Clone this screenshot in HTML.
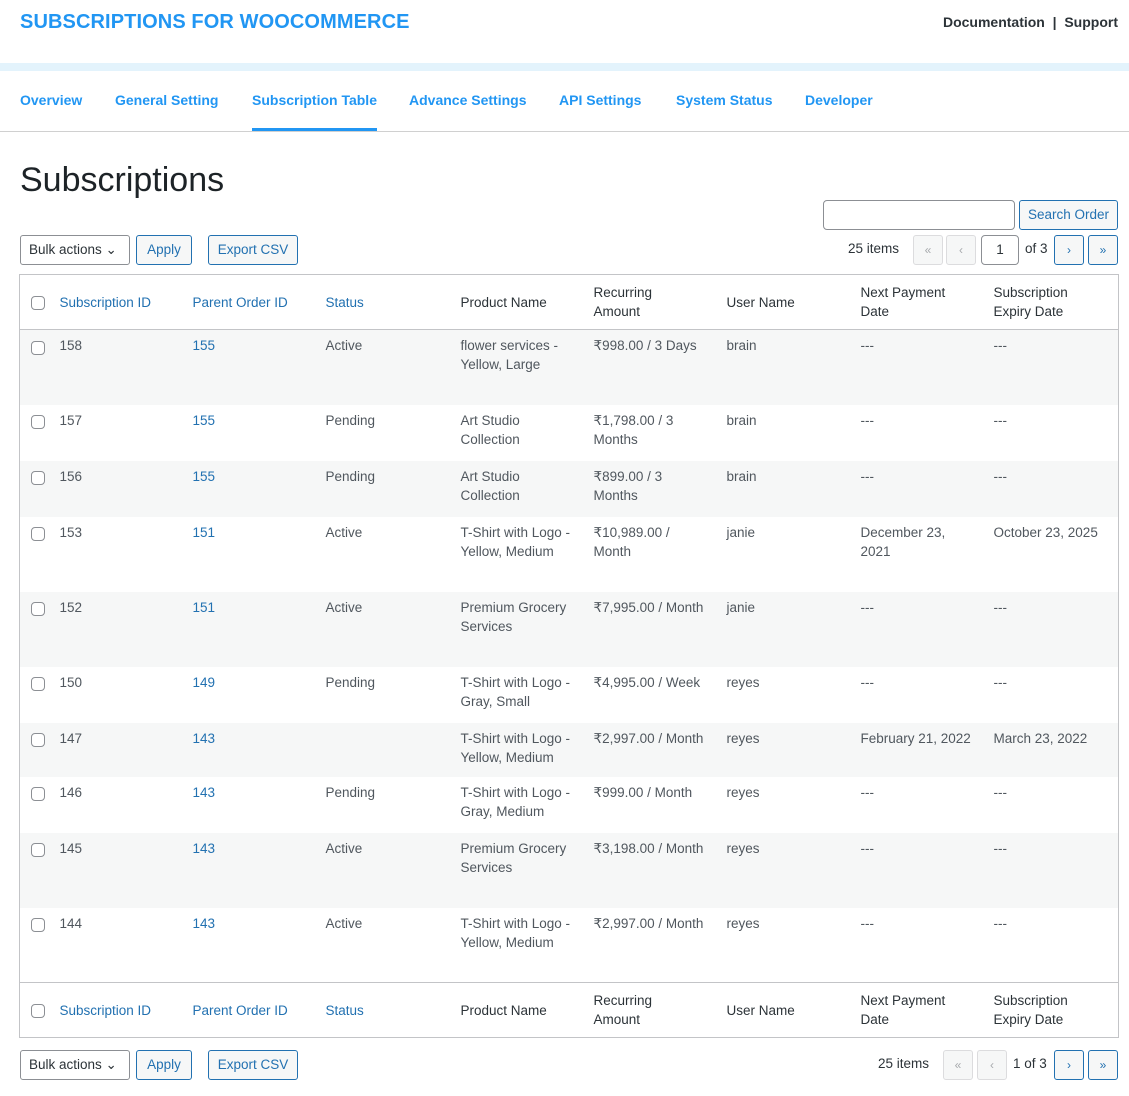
<!DOCTYPE html>
<html><head><meta charset="utf-8"><style>
*{box-sizing:border-box;margin:0;padding:0}
body{width:1129px;height:1096px;background:#fff;font-family:"Liberation Sans",sans-serif;color:#50575e;font-size:13.5px;position:relative;overflow:hidden}
.abs{position:absolute}
.brand{left:20px;top:11px;font-size:20px;font-weight:bold;color:#2196f3;letter-spacing:0.1px}
.toplinks{right:11px;top:14px;font-size:14px;font-weight:bold;color:#2c3338}
.band{left:0;top:63px;width:1129px;height:8px;background:#e3f3fc}
.nav{top:92px;font-size:14px;font-weight:bold;color:#2196f3}
.navline{left:0;top:131px;width:1129px;height:1px;background:#d0d0d0}
.under{left:252px;top:128px;width:125px;height:3px;background:#2196f3}
h1{position:absolute;left:20px;top:161px;font-size:34px;font-weight:normal;color:#1d2327}
.btn{position:absolute;height:30px;border:1px solid #2271b1;border-radius:3px;background:#f6f7f7;color:#2271b1;font-size:13.5px;line-height:28px;text-align:center}
.sel{position:absolute;height:30px;border:1px solid #8c8f94;border-radius:3px;background:#fff;color:#2c3338;font-size:13.5px;line-height:28px;padding-left:8px}
.pg{position:absolute;width:30px;height:30px;border-radius:3px;text-align:center;line-height:28px;font-size:12px}
.pg.d{border:1px solid #dcdcde;background:#f6f7f7;color:#a7aaad}
.pg.a{border:1px solid #2271b1;background:#f6f7f7;color:#2271b1}
table{position:absolute;left:19px;top:274px;width:1099px;border:1px solid #c3c4c7;border-collapse:collapse;table-layout:fixed}
td,th{vertical-align:top;padding:6px 8px 0 8px;font-size:13.5px;line-height:19px;text-align:left;font-weight:normal;white-space:nowrap}
thead th,tfoot th{vertical-align:middle;padding:0 8px;color:#2c3338;height:55px}
thead tr{border-bottom:1px solid #c3c4c7}
tfoot tr{border-top:1px solid #c3c4c7}
th.l{color:#2271b1}
tr.g td{background:#f6f7f7}
.cb{display:inline-block;width:14px;height:14px;border:1px solid #8c8f94;border-radius:4px;background:#fff;margin-left:3px;vertical-align:middle}
td .cb{margin-top:3px}
a{color:#2271b1;text-decoration:none}
</style></head><body>
<div class="abs brand">SUBSCRIPTIONS FOR WOOCOMMERCE</div>
<div class="abs toplinks">Documentation &nbsp;|&nbsp; Support</div>
<div class="abs band"></div>
<div class="abs nav" style="left:20px">Overview</div>
<div class="abs nav" style="left:115px">General Setting</div>
<div class="abs nav" style="left:252px">Subscription Table</div>
<div class="abs nav" style="left:409px">Advance Settings</div>
<div class="abs nav" style="left:559px">API Settings</div>
<div class="abs nav" style="left:676px">System Status</div>
<div class="abs nav" style="left:805px">Developer</div>
<div class="abs navline"></div>
<div class="abs under"></div>
<h1>Subscriptions</h1>

<div class="abs" style="left:823px;top:200px;width:192px;height:30px;border:1px solid #8c8f94;border-radius:4px"></div>
<div class="btn" style="left:1019px;top:200px;width:99px">Search Order</div>

<div class="sel" style="left:20px;top:235px;width:110px">Bulk actions ⌄</div>
<div class="btn" style="left:136px;top:235px;width:56px">Apply</div>
<div class="btn" style="left:208px;top:235px;width:90px">Export CSV</div>
<div class="abs" style="left:848px;top:241px;color:#2c3338">25 items</div>
<div class="pg d" style="left:913px;top:235px">«</div>
<div class="pg d" style="left:946px;top:235px">‹</div>
<div class="abs" style="left:981px;top:235px;width:38px;height:30px;border:1px solid #8c8f94;border-radius:4px;text-align:center;line-height:28px;color:#2c3338">1</div>
<div class="abs" style="left:1025px;top:241px;color:#2c3338">of 3</div>
<div class="pg a" style="left:1054px;top:235px">›</div>
<div class="pg a" style="left:1088px;top:235px">»</div>

<table>
<colgroup><col style="width:32px"><col style="width:133px"><col style="width:133px"><col style="width:135px"><col style="width:133px"><col style="width:133px"><col style="width:134px"><col style="width:133px"><col style="width:133px"></colgroup>
<thead><tr><th><span class="cb"></span></th><th class="l">Subscription ID</th><th class="l">Parent Order ID</th><th class="l">Status</th><th>Product Name</th><th>Recurring<br>Amount</th><th>User Name</th><th>Next Payment<br>Date</th><th>Subscription<br>Expiry Date</th></tr></thead>
<tbody>
<tr class="g" style="height:75px"><td><span class="cb"></span></td><td>158</td><td><a>155</a></td><td>Active</td><td>flower services -<br>Yellow, Large</td><td>₹998.00 / 3 Days</td><td>brain</td><td>---</td><td>---</td></tr>
<tr style="height:56px"><td><span class="cb"></span></td><td>157</td><td><a>155</a></td><td>Pending</td><td>Art Studio<br>Collection</td><td>₹1,798.00 / 3<br>Months</td><td>brain</td><td>---</td><td>---</td></tr>
<tr class="g" style="height:56px"><td><span class="cb"></span></td><td>156</td><td><a>155</a></td><td>Pending</td><td>Art Studio<br>Collection</td><td>₹899.00 / 3<br>Months</td><td>brain</td><td>---</td><td>---</td></tr>
<tr style="height:75px"><td><span class="cb"></span></td><td>153</td><td><a>151</a></td><td>Active</td><td>T-Shirt with Logo -<br>Yellow, Medium</td><td>₹10,989.00 /<br>Month</td><td>janie</td><td>December 23,<br>2021</td><td>October 23, 2025</td></tr>
<tr class="g" style="height:75px"><td><span class="cb"></span></td><td>152</td><td><a>151</a></td><td>Active</td><td>Premium Grocery<br>Services</td><td>₹7,995.00 / Month</td><td>janie</td><td>---</td><td>---</td></tr>
<tr style="height:56px"><td><span class="cb"></span></td><td>150</td><td><a>149</a></td><td>Pending</td><td>T-Shirt with Logo -<br>Gray, Small</td><td>₹4,995.00 / Week</td><td>reyes</td><td>---</td><td>---</td></tr>
<tr class="g" style="height:54px"><td><span class="cb"></span></td><td>147</td><td><a>143</a></td><td></td><td>T-Shirt with Logo -<br>Yellow, Medium</td><td>₹2,997.00 / Month</td><td>reyes</td><td>February 21, 2022</td><td>March 23, 2022</td></tr>
<tr style="height:56px"><td><span class="cb"></span></td><td>146</td><td><a>143</a></td><td>Pending</td><td>T-Shirt with Logo -<br>Gray, Medium</td><td>₹999.00 / Month</td><td>reyes</td><td>---</td><td>---</td></tr>
<tr class="g" style="height:75px"><td><span class="cb"></span></td><td>145</td><td><a>143</a></td><td>Active</td><td>Premium Grocery<br>Services</td><td>₹3,198.00 / Month</td><td>reyes</td><td>---</td><td>---</td></tr>
<tr style="height:75px"><td><span class="cb"></span></td><td>144</td><td><a>143</a></td><td>Active</td><td>T-Shirt with Logo -<br>Yellow, Medium</td><td>₹2,997.00 / Month</td><td>reyes</td><td>---</td><td>---</td></tr>
</tbody>
<tfoot><tr><th><span class="cb"></span></th><th class="l">Subscription ID</th><th class="l">Parent Order ID</th><th class="l">Status</th><th>Product Name</th><th>Recurring<br>Amount</th><th>User Name</th><th>Next Payment<br>Date</th><th>Subscription<br>Expiry Date</th></tr></tfoot>
</table>

<div class="sel" style="left:20px;top:1050px;width:110px">Bulk actions ⌄</div>
<div class="btn" style="left:136px;top:1050px;width:56px">Apply</div>
<div class="btn" style="left:208px;top:1050px;width:90px">Export CSV</div>
<div class="abs" style="left:878px;top:1056px;color:#2c3338">25 items</div>
<div class="pg d" style="left:943px;top:1050px">«</div>
<div class="pg d" style="left:977px;top:1050px">‹</div>
<div class="abs" style="left:1013px;top:1056px;color:#2c3338">1 of 3</div>
<div class="pg a" style="left:1054px;top:1050px">›</div>
<div class="pg a" style="left:1088px;top:1050px">»</div>
</body></html>
